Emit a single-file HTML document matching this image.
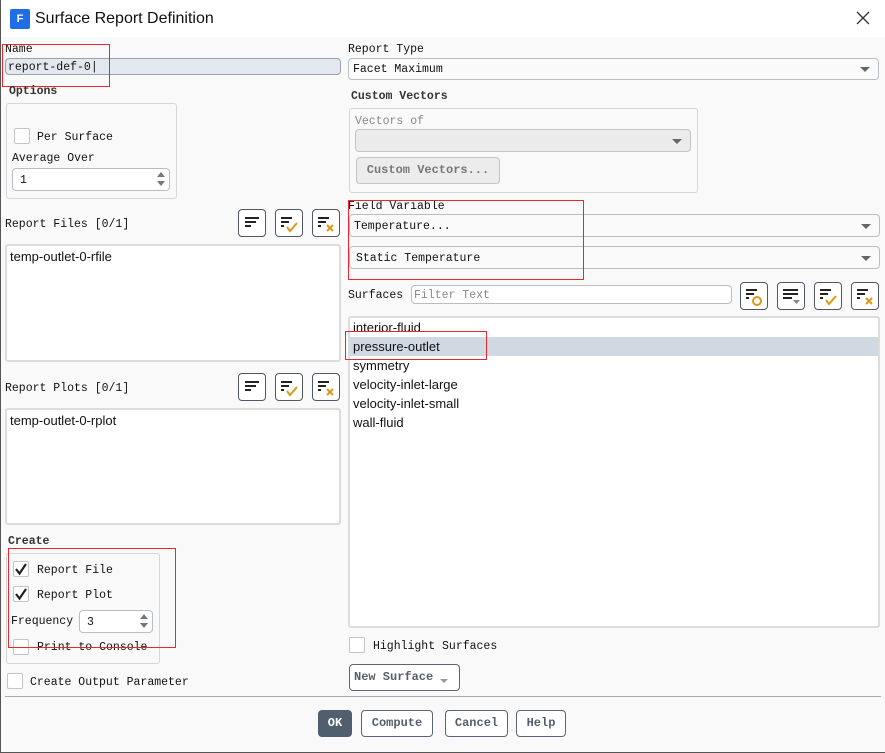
<!DOCTYPE html>
<html><head><meta charset="utf-8"><style>
*{box-sizing:border-box;margin:0;padding:0}
body{width:885px;height:753px;background:#f9f9f9;position:relative;overflow:hidden;font-family:"Liberation Mono",monospace;font-size:11.5px;color:#111}
.a{position:absolute}
.t{position:absolute;white-space:nowrap;line-height:14px;margin-top:1px}
.b{font-weight:bold;color:#333}
.box{position:absolute;border:1px solid #d6d6d6;border-radius:3px}
.inp{position:absolute;border:1px solid #b9bec6;border-radius:4px;background:#fafafa}
.list{position:absolute;background:#fff;border:2px solid #dcdcdc;border-radius:3px}
.sans{font-family:"Liberation Sans",sans-serif;font-size:13px;color:#111;margin-top:0}
.cb{position:absolute;width:16px;height:16px;border:1px solid #c4c4c4;background:#fff;border-radius:2px}
.red{position:absolute;border:1px solid #e8282d}
.ib{position:absolute;width:28px;height:28px;border:1px solid #4f5864;border-radius:4px;background:#fff}
.btn{position:absolute;border:1px solid #5a6675;border-radius:4px;background:#fff;font-weight:bold;color:#555e69;text-align:center;line-height:25px;font-size:12px}
.dd{position:absolute;right:8px;top:50%;margin-top:-2px;width:0;height:0;border-left:5px solid transparent;border-right:5px solid transparent;border-top:5px solid #666}
</style></head><body>
<div class="a" style="left:0;top:0;width:885px;height:37px;background:#fff"></div>
<div class="a" style="left:0;top:0;width:1px;height:753px;background:#555"></div>
<div class="a" style="left:0;top:752px;width:885px;height:1px;background:#555"></div>
<div class="a" style="left:10px;top:9px;width:20px;height:20px;background:#1f6ee8;border-radius:2px;color:#fff;font:bold 11px 'Liberation Sans',sans-serif;text-align:center;line-height:20px">F</div>
<div class="t" style="left:35px;top:9px;font:16px 'Liberation Sans',sans-serif;line-height:18px;color:#111">Surface Report Definition</div>
<svg class="a" style="left:856px;top:11px" width="14" height="14"><path d="M1 1L13 13M13 1L1 13" stroke="#333" stroke-width="1.3"/></svg>

<!-- left -->
<div class="t" style="left:5px;top:42px">Name</div>
<div class="inp" style="left:5px;top:58px;width:336px;height:17px;background:#e3e8ef;border-color:#9aa3ad"></div>
<div class="t" style="left:8px;top:60px">report-def-0|</div>
<div class="red" style="left:2px;top:44px;width:108px;height:43px"></div>
<div class="t b" style="left:9px;top:84px">Options</div>
<div class="box" style="left:6px;top:103px;width:171px;height:96px"></div>
<div class="cb" style="left:14px;top:128px"></div>
<div class="t" style="left:37px;top:130px">Per Surface</div>
<div class="t" style="left:12px;top:151px">Average Over</div>
<div class="inp" style="left:12px;top:168px;width:158px;height:23px;background:#fff"></div>
<div class="t" style="left:20px;top:173px">1</div>
<svg class="a" style="left:156px;top:170px" width="10" height="18"><path d="M1 7L5 2L9 7Z M1 11L5 16L9 11Z" fill="#777"/></svg>

<div class="t" style="left:5px;top:217px">Report Files [0/1]</div>
<div class="list" style="left:5px;top:244px;width:336px;height:118px"></div>
<div class="t sans" style="left:10px;top:250px">temp-outlet-0-rfile</div>
<div class="t" style="left:5px;top:381px">Report Plots [0/1]</div>
<div class="list" style="left:5px;top:408px;width:336px;height:117px"></div>
<div class="t sans" style="left:10px;top:414px">temp-outlet-0-rplot</div>

<div class="t b" style="left:8px;top:534px">Create</div>
<div class="box" style="left:6px;top:553px;width:154px;height:111px"></div>
<div class="cb" style="left:13px;top:561px"></div><svg class="a" style="left:14px;top:562px" width="14" height="14"><path d="M2 7L5.5 11.5L12 2" stroke="#222" stroke-width="2.2" fill="none"/></svg>
<div class="t" style="left:37px;top:563px">Report File</div>
<div class="cb" style="left:13px;top:586px"></div><svg class="a" style="left:14px;top:587px" width="14" height="14"><path d="M2 7L5.5 11.5L12 2" stroke="#222" stroke-width="2.2" fill="none"/></svg>
<div class="t" style="left:37px;top:588px">Report Plot</div>
<div class="t" style="left:11px;top:614px">Frequency</div>
<div class="inp" style="left:79px;top:610px;width:74px;height:23px;background:#fff"></div>
<div class="t" style="left:87px;top:615px">3</div>
<svg class="a" style="left:139px;top:612px" width="10" height="18"><path d="M1 7L5 2L9 7Z M1 11L5 16L9 11Z" fill="#777"/></svg>
<div class="cb" style="left:13px;top:639px"></div>
<div class="t" style="left:37px;top:640px">Print to Console</div>
<div class="red" style="left:8px;top:548px;width:168px;height:100px"></div>
<div class="cb" style="left:7px;top:673px"></div>
<div class="t" style="left:30px;top:675px">Create Output Parameter</div>

<!-- right -->
<div class="t" style="left:348px;top:42px">Report Type</div>
<div class="inp" style="left:348px;top:58px;width:531px;height:22px"><div class="dd"></div></div>
<div class="t" style="left:353px;top:62px">Facet Maximum</div>
<div class="t b" style="left:351px;top:89px">Custom Vectors</div>
<div class="box" style="left:349px;top:108px;width:349px;height:85px"></div>
<div class="t" style="left:355px;top:114px;color:#888">Vectors of</div>
<div class="inp" style="left:355px;top:129px;width:336px;height:23px;background:#ebebeb;border-color:#c4c4c4"><div class="dd"></div></div>
<div class="btn" style="left:356px;top:157px;width:144px;height:27px;background:#ececec;border-color:#c4c4c4;color:#777">Custom Vectors...</div>

<div class="t" style="left:348px;top:199px">Field Variable</div>
<div class="inp" style="left:349px;top:214px;width:531px;height:23px"><div class="dd"></div></div>
<div class="t" style="left:354px;top:219px">Temperature...</div>
<div class="inp" style="left:349px;top:246px;width:531px;height:23px"><div class="dd"></div></div>
<div class="t" style="left:356px;top:251px">Static Temperature</div>
<div class="red" style="left:348px;top:200px;width:236px;height:80px"></div>

<div class="t" style="left:348px;top:288px">Surfaces</div>
<div class="inp" style="left:411px;top:285px;width:321px;height:19px;background:#fff"></div>
<div class="t" style="left:414px;top:288px;color:#888">Filter Text</div>

<div class="list" style="left:348px;top:316px;width:532px;height:312px"></div>
<div class="a" style="left:350px;top:337px;width:528px;height:19px;background:#d0d8e2"></div>
<div class="t sans" style="left:353px;top:321px">interior-fluid</div>
<div class="t sans" style="left:353px;top:340px">pressure-outlet</div>
<div class="t sans" style="left:353px;top:359px">symmetry</div>
<div class="t sans" style="left:353px;top:378px">velocity-inlet-large</div>
<div class="t sans" style="left:353px;top:397px">velocity-inlet-small</div>
<div class="t sans" style="left:353px;top:416px">wall-fluid</div>
<div class="red" style="left:345px;top:331px;width:142px;height:29px"></div>

<div class="cb" style="left:349px;top:637px"></div>
<div class="t" style="left:373px;top:639px">Highlight Surfaces</div>
<div class="btn" style="left:349px;top:664px;width:111px;height:27px;text-align:left;padding-left:4px">New Surface <span style="display:inline-block;width:0;height:0;border-left:4px solid transparent;border-right:4px solid transparent;border-top:4px solid #999;vertical-align:-3px"></span></div>

<div class="a" style="left:5px;top:696px;width:876px;height:1px;background:#aaa"></div>
<div class="btn" style="left:318px;top:710px;width:34px;height:27px;background:#505e6e;border-color:#505e6e;color:#fff">OK</div>
<div class="btn" style="left:361px;top:710px;width:72px;height:27px">Compute</div>
<div class="btn" style="left:445px;top:710px;width:63px;height:27px">Cancel</div>
<div class="btn" style="left:516px;top:710px;width:50px;height:27px">Help</div>

<!-- icon buttons -->
<div class="ib" style="left:238px;top:209px"><svg width="26" height="26"><path d="M6 8H20M6 12H17M6 16H12" stroke="#222" stroke-width="2"/></svg></div>
<div class="ib" style="left:275px;top:209px"><svg width="26" height="26"><path d="M5 8H16M5 12H13M5 16H8" stroke="#222" stroke-width="2"/><path d="M11 17L14 21L21 13" stroke="#d99a15" stroke-width="2" fill="none"/></svg></div>
<div class="ib" style="left:312px;top:209px"><svg width="26" height="26"><path d="M5 8H16M5 12H13M5 16H8" stroke="#222" stroke-width="2"/><path d="M14 15L20 21M20 15L14 21" stroke="#d99a15" stroke-width="2"/></svg></div>
<div class="ib" style="left:238px;top:373px"><svg width="26" height="26"><path d="M6 8H20M6 12H17M6 16H12" stroke="#222" stroke-width="2"/></svg></div>
<div class="ib" style="left:275px;top:373px"><svg width="26" height="26"><path d="M5 8H16M5 12H13M5 16H8" stroke="#222" stroke-width="2"/><path d="M11 17L14 21L21 13" stroke="#d99a15" stroke-width="2" fill="none"/></svg></div>
<div class="ib" style="left:312px;top:373px"><svg width="26" height="26"><path d="M5 8H16M5 12H13M5 16H8" stroke="#222" stroke-width="2"/><path d="M14 15L20 21M20 15L14 21" stroke="#d99a15" stroke-width="2"/></svg></div>
<div class="ib" style="left:740px;top:282px"><svg width="26" height="26"><path d="M5 7H16M5 11H13M5 15H8" stroke="#222" stroke-width="2"/><circle cx="16" cy="18" r="4" stroke="#d99a15" stroke-width="2" fill="none"/></svg></div>
<div class="ib" style="left:777px;top:282px"><svg width="26" height="26"><path d="M5 7H20M5 11H20M5 15H14" stroke="#222" stroke-width="2"/><path d="M15 17H22L18.5 21Z" fill="#888"/></svg></div>
<div class="ib" style="left:814px;top:282px"><svg width="26" height="26"><path d="M5 7H16M5 11H13M5 15H8" stroke="#222" stroke-width="2"/><path d="M11 17L14 21L21 13" stroke="#d99a15" stroke-width="2" fill="none"/></svg></div>
<div class="ib" style="left:851px;top:282px"><svg width="26" height="26"><path d="M5 7H16M5 11H13M5 15H8" stroke="#222" stroke-width="2"/><path d="M14 15L20 21M20 15L14 21" stroke="#d99a15" stroke-width="2"/></svg></div>
</body></html>
